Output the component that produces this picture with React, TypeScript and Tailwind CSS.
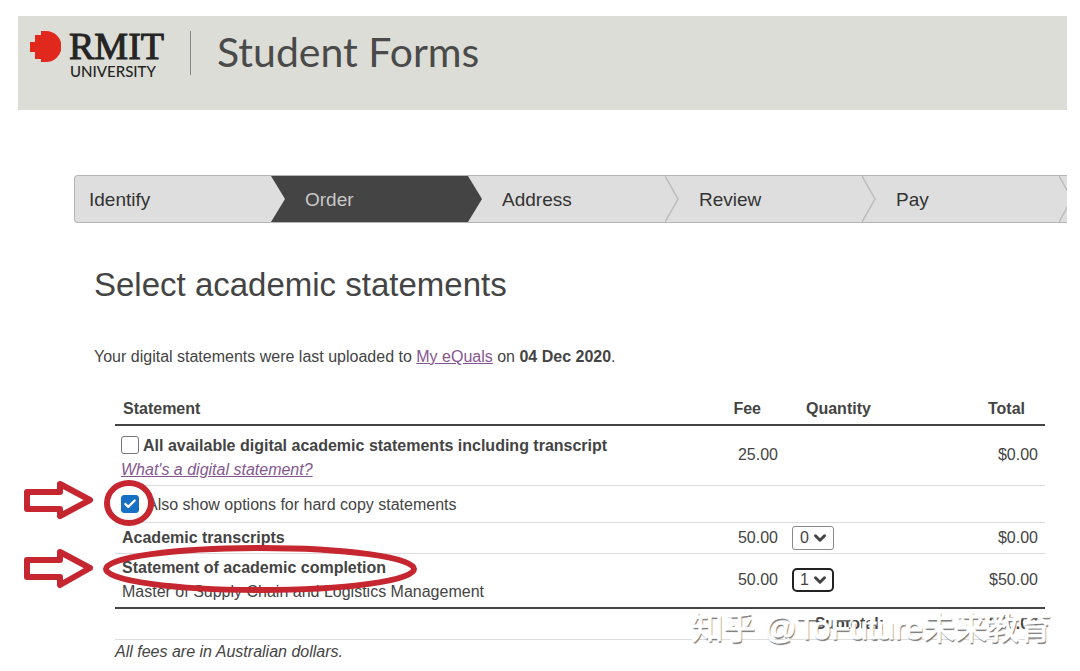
import React, { useState } from 'react';
import { Check, ChevronDown } from 'lucide-react';

type StepState = 'idle' | 'active' | 'afterActive';

interface StepProps {
    label?: string;
    state?: StepState;
}

interface QuantitySelectProps {
    label: string;
    value: number;
    highlighted?: boolean;
    onChange: (value: number) => void;
}

interface TickBoxProps {
    id: string;
    checked: boolean;
    onChange: (checked: boolean) => void;
}

const FEE = 50;

const formatMoney = (amount: number) => `$${amount.toFixed(2)}`;

const Logo: React.FC = () => (
    <div className="flex gap-2">
        <svg className="mt-px h-8 w-8" viewBox="0 0 32 32" fill="#e0281c" aria-hidden="true">
            <path d="M14 0h3a15 15 0 0 1 0 31h-5v-3H6v-7H1v-10h5V4h6V0z" />
        </svg>
        <div className="text-[#252525]">
            <div className="font-['Liberation_Serif',serif] text-[38px] leading-8 [-webkit-text-stroke:1px_#252525]">RMIT</div>
            <div className="px-px pt-px font-[Lato,sans-serif] text-[15px] leading-4 font-medium">UNIVERSITY</div>
        </div>
    </div>
);

const Step: React.FC<StepProps> = ({ label, state = 'idle' }) => (
    <li className={`flex w-[197px] shrink-0 items-center ${state === 'active' ? 'bg-[#444] text-[#c8c8c8]' : 'text-[#333]'}`}>
        <svg className="h-full w-[14px] shrink-0" viewBox="0 0 14 46" preserveAspectRatio="none" aria-hidden="true">
            {state === 'idle' && <path d="M0 0 13 23 0 46" fill="none" stroke="#bcbcbc" strokeWidth="1.5" />}
            {state === 'active' && <path d="M0 0 14 23 0 46z" fill="#dedede" />}
            {state === 'afterActive' && <path d="M0 0 14 23 0 46z" fill="#444" />}
        </svg>
        <span className="pt-[2px] pl-5">{label}</span>
    </li>
);

const TickBox: React.FC<TickBoxProps> = ({ id, checked, onChange }) => (
    <span className="grid h-[18px] w-[18px] shrink-0">
        <input
            id={id}
            type="checkbox"
            checked={checked}
            onChange={(e) => onChange(e.target.checked)}
            className="col-start-1 row-start-1 h-[18px] w-[18px] appearance-none rounded-[3px] border border-[#777] bg-white checked:border-[#1670c4] checked:bg-[#1670c4]"
        />
        {checked && (
            <Check size={14} strokeWidth={4} className="pointer-events-none col-start-1 row-start-1 place-self-center text-white" />
        )}
    </span>
);

const QuantitySelect: React.FC<QuantitySelectProps> = ({ label, value, highlighted, onChange }) => (
    <span className="grid w-[42px]">
        <select
            aria-label={label}
            value={value}
            onChange={(e) => onChange(Number(e.target.value))}
            className={`col-start-1 row-start-1 h-6 w-full appearance-none bg-white leading-5 ${
                highlighted ? 'rounded-[5px] border-2 border-[#222] pl-[6px]' : 'rounded-[3px] border border-[#888] pl-[7px]'
            }`}
        >
            {[0, 1, 2, 3, 4, 5].map((n) => (
                <option key={n} value={n}>
                    {n}
                </option>
            ))}
        </select>
        <ChevronDown
            size={18}
            strokeWidth={4}
            className="pointer-events-none col-start-1 row-start-1 mr-[5px] self-center justify-self-end text-[#444]"
        />
    </span>
);

// 赤い矢印と丸囲み
const Annotations: React.FC = () => (
    <svg
        className="pointer-events-none absolute top-0 -left-[100px] h-[260px] w-[440px]"
        viewBox="15 390 440 260"
        fill="none"
        stroke="#c5262f"
        strokeWidth="6"
        strokeLinejoin="round"
        aria-hidden="true"
    >
        <path d="M27 491H60V483L90 499 60 515V508H27z" />
        <path d="M27 559H60V551L90 567 60 584V576H27z" />
        <ellipse cx="129" cy="502" rx="22" ry="20" />
        <ellipse cx="260" cy="568" rx="154" ry="21" />
    </svg>
);

export default function App() {
    const [digital, setDigital] = useState(false);
    const [hardCopy, setHardCopy] = useState(true);
    const [transcripts, setTranscripts] = useState(0);
    const [completion, setCompletion] = useState(1);

    const subtotal = (digital ? 25 : 0) + (transcripts + completion) * FEE;

    return (
        <div className="overflow-hidden bg-white pt-4 font-['Liberation_Sans','Noto_Sans_CJK_SC',sans-serif] text-base text-[#444]">
            <header className="mr-[13px] ml-[18px] flex h-[94px] items-start bg-[#dcddd6] pt-[14px] pl-[11px]">
                <Logo />
                <div className="mt-px ml-[26px] h-11 w-px bg-[#888]" />
                <span className="ml-[26px] font-[Lato,sans-serif] text-[41px] leading-11 text-[#4a4a4a]">Student Forms</span>
            </header>

            <nav className="mt-[65px] mr-[13px] ml-[74px] overflow-hidden rounded-l-[4px] border border-r-0 border-[#b5b5b5] bg-[#dedede]">
                <ol className="flex h-[46px] text-[19px]">
                    <li className="flex w-[196px] shrink-0 items-center pt-[2px] pl-[14px] text-[#333]">Identify</li>
                    <Step label="Order" state="active" />
                    <Step label="Address" state="afterActive" />
                    <Step label="Review" />
                    <Step label="Pay" />
                    <Step />
                </ol>
            </nav>

            <main className="mr-[35px] ml-[94px]">
                <h1 className="mt-[42px] text-[33px] leading-10">Select academic statements</h1>
                <p className="mt-[42px] leading-5">
                    Your digital statements were last uploaded to{' '}
                    <a href="#equals" className="text-[#85578f] underline">
                        My eQuals
                    </a>{' '}
                    on <strong>04 Dec 2020</strong>.
                </p>

                <div className="relative mt-6 ml-[21px]">
                    <table className="w-full table-fixed border-collapse text-left">
                        <colgroup>
                            <col />
                            <col className="w-[64px]" />
                            <col className="w-[106px]" />
                            <col className="w-[153px]" />
                        </colgroup>
                        <thead>
                            <tr className="h-[34px] border-b-2 border-[#444]">
                                <th className="pt-[2px] pl-2">Statement</th>
                                <th className="pt-[2px] pr-[25px] text-right">Fee</th>
                                <th className="pt-[2px] pl-5">Quantity</th>
                                <th className="pt-[2px] pr-5 text-right">Total</th>
                            </tr>
                        </thead>
                        <tbody>
                            <tr className="h-[60px] border-b border-[#ddd]">
                                <td className="pt-1 pl-[6px]">
                                    <div className="flex items-center gap-1">
                                        <TickBox id="digital" checked={digital} onChange={setDigital} />
                                        <label htmlFor="digital" className="pt-[2px] font-bold whitespace-nowrap">
                                            All available digital academic statements including transcript
                                        </label>
                                    </div>
                                    <a href="#digital-statement" className="text-[#85578f] italic underline">
                                        What's a digital statement?
                                    </a>
                                </td>
                                <td className="pr-2 text-right">25.00</td>
                                <td />
                                <td className="pr-[7px] text-right">{formatMoney(digital ? 25 : 0)}</td>
                            </tr>
                            <tr className="h-[37px] border-b border-[#ddd]">
                                <td className="pl-[6px]" colSpan={4}>
                                    <div className="flex items-center gap-2">
                                        <TickBox id="hard-copy" checked={hardCopy} onChange={setHardCopy} />
                                        <label htmlFor="hard-copy" className="pt-[2px]">
                                            Also show options for hard copy statements
                                        </label>
                                    </div>
                                </td>
                            </tr>
                            <tr className="h-[31px] border-b border-[#ddd]">
                                <td className="pl-[7px] font-bold">Academic transcripts</td>
                                <td className="pr-2 text-right">50.00</td>
                                <td className="pl-[6px]">
                                    <QuantitySelect label="Academic transcripts" value={transcripts} onChange={setTranscripts} />
                                </td>
                                <td className="pr-[7px] text-right">{formatMoney(transcripts * FEE)}</td>
                            </tr>
                            <tr className="h-[55px] border-b-2 border-[#444]">
                                <td className="pl-[7px]">
                                    <div className="font-bold">Statement of academic completion</div>
                                    <div>Master of Supply Chain and Logistics Management</div>
                                </td>
                                <td className="pr-2 text-right">50.00</td>
                                <td className="pl-[6px]">
                                    <QuantitySelect
                                        label="Statement of academic completion"
                                        value={completion}
                                        highlighted
                                        onChange={setCompletion}
                                    />
                                </td>
                                <td className="pr-[7px] text-right">{formatMoney(completion * FEE)}</td>
                            </tr>
                            <tr className="h-[31px] border-b border-[#ddd] font-bold">
                                <td />
                                <td />
                                <td className="pr-2 text-right">Subtotal:</td>
                                <td className="pr-[7px] text-right">{formatMoney(subtotal)}</td>
                            </tr>
                        </tbody>
                    </table>
                    <p className="italic">All fees are in Australian dollars.</p>
                    <Annotations />
                    <div className="pointer-events-none absolute -right-[6px] bottom-4 text-[32px] leading-10 whitespace-nowrap text-white [-webkit-text-stroke:1px_white] [text-shadow:1px_2px_1px_#777]">
                        知乎 @ToFuture未来教育
                    </div>
                </div>
            </main>
        </div>
    );
}
